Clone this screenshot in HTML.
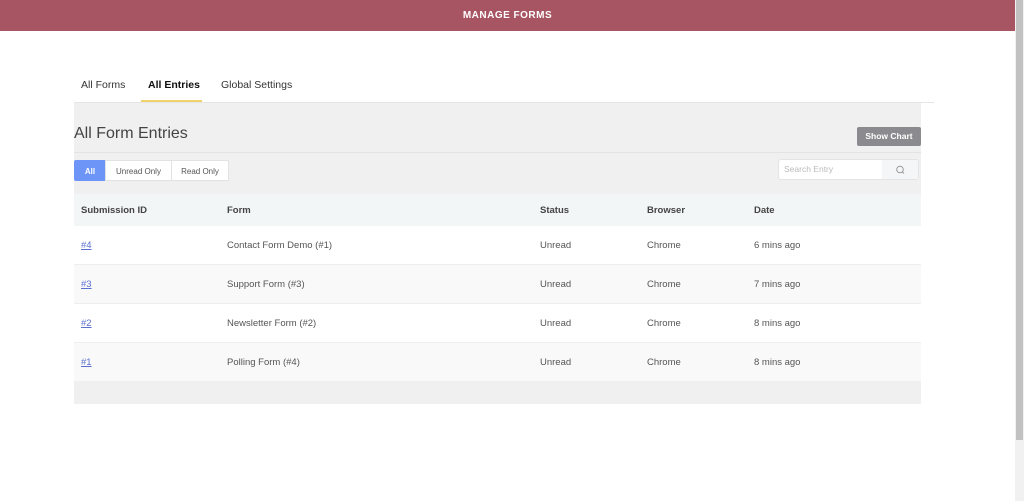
<!DOCTYPE html><html><head><style>
body{margin:0;width:1024px;height:501px;overflow:hidden;background:#fff;font-family:"Liberation Sans",sans-serif;position:relative}
.hdr{position:absolute;left:0;top:0;width:1015px;height:31px;background:#a85563;color:#fff;font-weight:bold;font-size:10px;letter-spacing:.5px;text-align:center;line-height:31px}
.sb{position:absolute;left:1015px;top:0;width:9px;height:501px;background:#f1f1f1}
.sb div{position:absolute;left:1px;top:0;width:7px;height:440px;background:#c1c1c1}
.t{position:absolute;top:79px;font-size:10.5px;color:#333}
.ul{position:absolute;left:141px;top:100px;width:61px;height:2px;background:#f2d36b}
.line{position:absolute;left:74px;top:102px;width:860px;height:1px;background:#e5e5e5}
.panel{position:absolute;left:74px;top:103px;width:847px;height:301px;background:#f0f0f0}
h1{position:absolute;left:74px;top:125px;margin:0;font-weight:normal;font-size:16px;color:#444}
.sep{position:absolute;left:74px;top:152px;width:847px;height:1px;background:#e3e3e3}
.btn{position:absolute;left:857px;top:127px;width:64px;height:19px;background:#8b8b8f;color:#fff;font-size:8.5px;font-weight:bold;text-align:center;line-height:19px;border-radius:2px}
.seg{position:absolute;top:160px;height:21px;line-height:21px;font-size:8px;color:#555;background:#fff;text-align:center;border:1px solid #e2e2e2;box-sizing:border-box}
.search{position:absolute;left:778px;top:159px;width:141px;height:21px;background:#fff;border:1px solid #e4e4e4;border-radius:3px;box-sizing:border-box;font-size:8.5px;color:#bbb;line-height:19px;padding-left:5px}
.search span{position:absolute;right:0;top:0;width:36px;height:19px;background:#f5f6f8}
.row{position:absolute;left:74px;width:847px;font-size:9.5px;color:#555}
.row div{position:absolute;top:1px}
</style></head><body>
<div class="hdr">MANAGE FORMS</div>
<div class="sb"><div></div></div>
<div class="t" style="left:81px">All Forms</div>
<div class="t" style="left:148px;font-weight:bold;color:#111">All Entries</div>
<div class="t" style="left:221px">Global Settings</div>
<div class="line"></div><div class="ul"></div>
<div class="panel"></div>
<h1>All Form Entries</h1>
<div class="btn">Show Chart</div>
<div class="sep"></div>
<div class="seg" style="left:74px;width:32px;background:#6d95f7;color:#fff;border-color:#6d95f7;border-radius:2px 0 0 2px;font-weight:bold">All</div>
<div class="seg" style="left:105px;width:67px">Unread Only</div>
<div class="seg" style="left:171px;width:58px;border-radius:0 2px 2px 0">Read Only</div>
<div class="search">Search Entry<span><svg width="36" height="19"><circle cx="18" cy="9.5" r="3.3" fill="none" stroke="#999" stroke-width="1"/><line x1="20.4" y1="11.9" x2="22" y2="13.5" stroke="#999"/></svg></span></div>
<div class="row" style="top:194px;height:32px;background:#f3f6f6;font-weight:bold;color:#444;line-height:32px"><div style="left:7px">Submission ID</div><div style="left:153px">Form</div><div style="left:466px">Status</div><div style="left:573px">Browser</div><div style="left:680px">Date</div></div>
<div class="row" style="top:226px;height:38px;background:#fff;line-height:38px;border-bottom:1px solid #eee"><div style="left:7px;color:#5a6fd0;text-decoration:underline">#4</div><div style="left:153px">Contact Form Demo (#1)</div><div style="left:466px">Unread</div><div style="left:573px">Chrome</div><div style="left:680px">6 mins ago</div></div>
<div class="row" style="top:265px;height:38px;background:#f9f9f9;line-height:38px;border-bottom:1px solid #eee"><div style="left:7px;color:#5a6fd0;text-decoration:underline">#3</div><div style="left:153px">Support Form (#3)</div><div style="left:466px">Unread</div><div style="left:573px">Chrome</div><div style="left:680px">7 mins ago</div></div>
<div class="row" style="top:304px;height:38px;background:#fff;line-height:38px;border-bottom:1px solid #eee"><div style="left:7px;color:#5a6fd0;text-decoration:underline">#2</div><div style="left:153px">Newsletter Form (#2)</div><div style="left:466px">Unread</div><div style="left:573px">Chrome</div><div style="left:680px">8 mins ago</div></div>
<div class="row" style="top:343px;height:38px;background:#f9f9f9;line-height:38px"><div style="left:7px;color:#5a6fd0;text-decoration:underline">#1</div><div style="left:153px">Polling Form (#4)</div><div style="left:466px">Unread</div><div style="left:573px">Chrome</div><div style="left:680px">8 mins ago</div></div>
</body></html>
